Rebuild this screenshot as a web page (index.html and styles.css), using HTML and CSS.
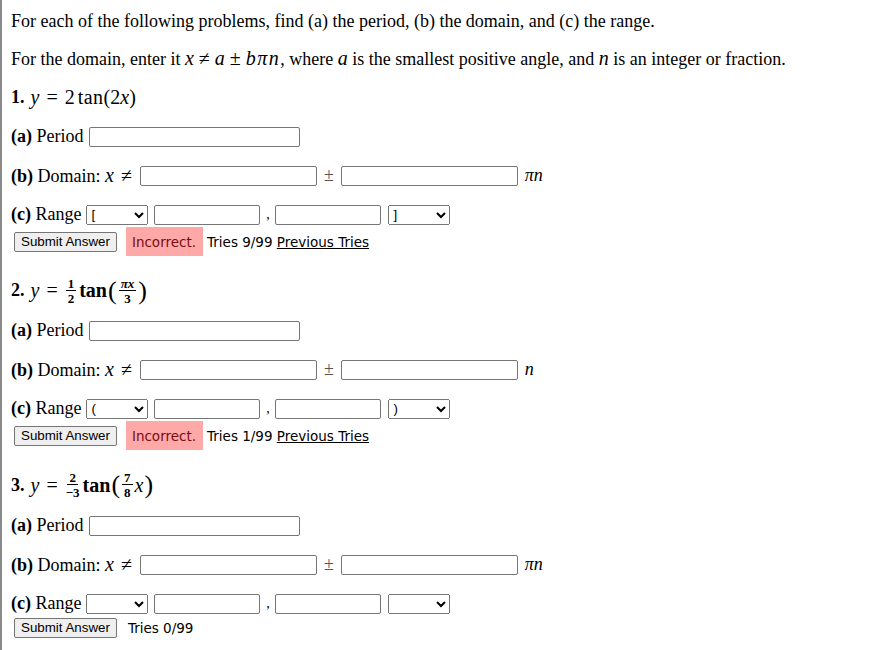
FILE: index.html
```html
<!DOCTYPE html>
<html>
<head>
<meta charset="utf-8">
<link rel="stylesheet" href="styles.css">
</head>
<body>
<div class="page">
  <p class="intro">For each of the following problems, find (a) the period, (b) the domain, and (c) the range.</p>
  <p class="intro intro2">For the domain, enter it <span class="m"><i>x</i><span class="op">≠</span><i>a</i><span class="op">±</span><i class="sp">bπn</i></span>, where <i class="m">a</i> is the smallest positive angle, and <i class="m">n</i> is an integer or fraction.</p>

  <section class="prob">
    <div class="head h1"><b>1.</b><span class="m"><i>y</i><span class="op">=</span>2<span class="fn">tan</span>(2<i>x</i>)</span></div>
    <div class="row"><span class="lbl"><b>(a)</b> Period</span><input class="in period" type="text"></div>
    <div class="row"><span class="lbl"><b>(b)</b> Domain: <span class="m"><i>x</i><span class="op">≠</span></span></span><input class="in dom" type="text"><span class="pm">±</span><input class="in dom" type="text"><span class="m tail"><i>πn</i></span></div>
    <div class="row"><span class="lbl"><b>(c)</b> Range</span><select class="sel"><option>[</option></select><input class="in rng" type="text"><span class="comma">,</span><input class="in rng" type="text"><select class="sel sel2"><option>]</option></select></div>
    <div class="submit"><button class="btn">Submit Answer</button><span class="bad">Incorrect.</span><span class="tries">Tries 9/99 <a class="prev">Previous Tries</a></span></div>
  </section>

  <section class="prob">
    <div class="head h2"><b>2.</b><span class="m"><i>y</i><span class="op">=</span><span class="frac"><span class="num">1</span><span class="den">2</span></span><span class="fn bold">tan</span><span class="bigp">(</span><span class="frac"><span class="num"><i>πx</i></span><span class="den">3</span></span><span class="bigp">)</span></span></div>
    <div class="row"><span class="lbl"><b>(a)</b> Period</span><input class="in period" type="text"></div>
    <div class="row"><span class="lbl"><b>(b)</b> Domain: <span class="m"><i>x</i><span class="op">≠</span></span></span><input class="in dom" type="text"><span class="pm">±</span><input class="in dom" type="text"><span class="m tail"><i>n</i></span></div>
    <div class="row"><span class="lbl"><b>(c)</b> Range</span><select class="sel"><option>(</option></select><input class="in rng" type="text"><span class="comma">,</span><input class="in rng" type="text"><select class="sel sel2"><option>)</option></select></div>
    <div class="submit"><button class="btn">Submit Answer</button><span class="bad">Incorrect.</span><span class="tries">Tries 1/99 <a class="prev">Previous Tries</a></span></div>
  </section>

  <section class="prob">
    <div class="head h3"><b>3.</b><span class="m"><i>y</i><span class="op">=</span><span class="frac"><span class="num">2</span><span class="den">−3</span></span><span class="fn bold">tan</span><span class="bigp">(</span><span class="frac"><span class="num">7</span><span class="den">8</span></span><i class="bx">x</i><span class="bigp">)</span></span></div>
    <div class="row"><span class="lbl"><b>(a)</b> Period</span><input class="in period" type="text"></div>
    <div class="row"><span class="lbl"><b>(b)</b> Domain: <span class="m"><i>x</i><span class="op">≠</span></span></span><input class="in dom" type="text"><span class="pm">±</span><input class="in dom" type="text"><span class="m tail"><i>πn</i></span></div>
    <div class="row"><span class="lbl"><b>(c)</b> Range</span><select class="sel"><option></option></select><input class="in rng" type="text"><span class="comma">,</span><input class="in rng" type="text"><select class="sel sel2"><option></option></select></div>
    <div class="submit plain"><button class="btn">Submit Answer</button><span class="tries">Tries 0/99</span></div>
  </section>
</div>
</body>
</html>
```

FILE: styles.css
```css
html, body {
  margin: 0;
  padding: 0;
  background: #ffffff;
}
body {
  font-family: "Liberation Serif", "Times New Roman", serif;
  font-size: 18px;
  color: #000;
}
.page {
  border-left: 2px solid #8a8a8a;
  padding: 11px 0 20px 9px;
  min-height: 619px;
}
.intro {
  margin: 0 0 16px 0;
  line-height: 21px;
  height: 21px;
  white-space: nowrap;
}
.intro2 {
  margin-bottom: 15px;
}
.intro .m {
  font-size: 20px;
  line-height: 21px;
}
.intro .sp {
  letter-spacing: 1.5px;
}
.intro .op {
  margin: 0 5px;
}
.m i {
  font-style: italic;
}
.m .op {
  font-style: normal;
}
.prob {
  margin-bottom: 21px;
}
.head {
  display: flex;
  align-items: center;
  height: 26px;
  margin-bottom: 16px;
  white-space: nowrap;
}
.head.h2 { height: 27px; }
.head.h3 { height: 28px; }
.head b {
  margin-right: 6px;
}
.head .m {
  display: flex;
  align-items: center;
  font-size: 20px;
}
.head .op {
  margin: 0 7px;
}
.fn {
  margin-left: 3px;
  letter-spacing: 0.5px;
}
.fn.bold {
  font-weight: bold;
  margin-left: 2px;
  letter-spacing: 0;
}
.frac {
  display: inline-flex;
  flex-direction: column;
  align-items: center;
  font-size: 13px;
  line-height: 11px;
  font-weight: bold;
  margin: 0 1px;
}
.frac .num {
  border-bottom: 1px solid #000;
  padding: 0 2px 1px;
}
.frac .den {
  padding-top: 2px;
}
.bigp {
  font-size: 26px;
  line-height: 26px;
  margin: 0 1px;
}
.bx {
  margin-left: 1px;
}
.row {
  display: flex;
  align-items: center;
  height: 21px;
  margin-bottom: 18px;
  white-space: nowrap;
}
.row:nth-of-type(4) {
  margin-bottom: 2px;
}
.row .m {
  font-size: 20px;
}
.row .op {
  margin: 0 3px 0 7px;
}
.lbl {
  margin-right: 5px;
}
.in {
  box-sizing: border-box;
  height: 20px;
  border: 1px solid #767676;
  border-radius: 2px;
  padding: 1px 2px;
  font-family: "Liberation Sans", Arial, sans-serif;
  font-size: 13.333px;
  background: #fff;
}
.in.period { width: 211px; }
.in.dom { width: 177px; }
.in.rng { width: 106px; }
.pm {
  color: #555;
  margin: 0 7px;
}
.row .tail {
  margin-left: 7px;
  font-size: 18px;
}
.sel {
  box-sizing: border-box;
  width: 62px;
  height: 20px;
  font-family: "Liberation Sans", Arial, sans-serif;
  font-size: 13.333px;
  margin-right: 6px;
}
.sel2 {
  margin-left: 7px;
  margin-right: 0;
}
.comma {
  width: 15px;
  text-align: center;
  font-size: 14px;
}
.submit {
  display: flex;
  align-items: center;
  height: 29px;
  padding-left: 3px;
  white-space: nowrap;
  font-family: "DejaVu Sans", Verdana, sans-serif;
  font-size: 13.5px;
}
.submit.plain {
  height: 23px;
}
.btn {
  box-sizing: border-box;
  height: 20px;
  font-family: "Liberation Sans", Arial, sans-serif;
  font-size: 13.333px;
  padding: 0 6px;
  border: 1px solid #767676;
  border-radius: 2px;
  background: #efefef;
  color: #000;
}
.bad {
  display: flex;
  align-items: center;
  height: 29px;
  background: #ffa8a8;
  color: #7a0a14;
  padding: 0 7px 0 6px;
  margin-left: 9px;
}
.tries {
  margin-left: 4px;
}
.plain .tries {
  margin-left: 11px;
}
.prev {
  color: #000;
  text-decoration: underline;
}
```
